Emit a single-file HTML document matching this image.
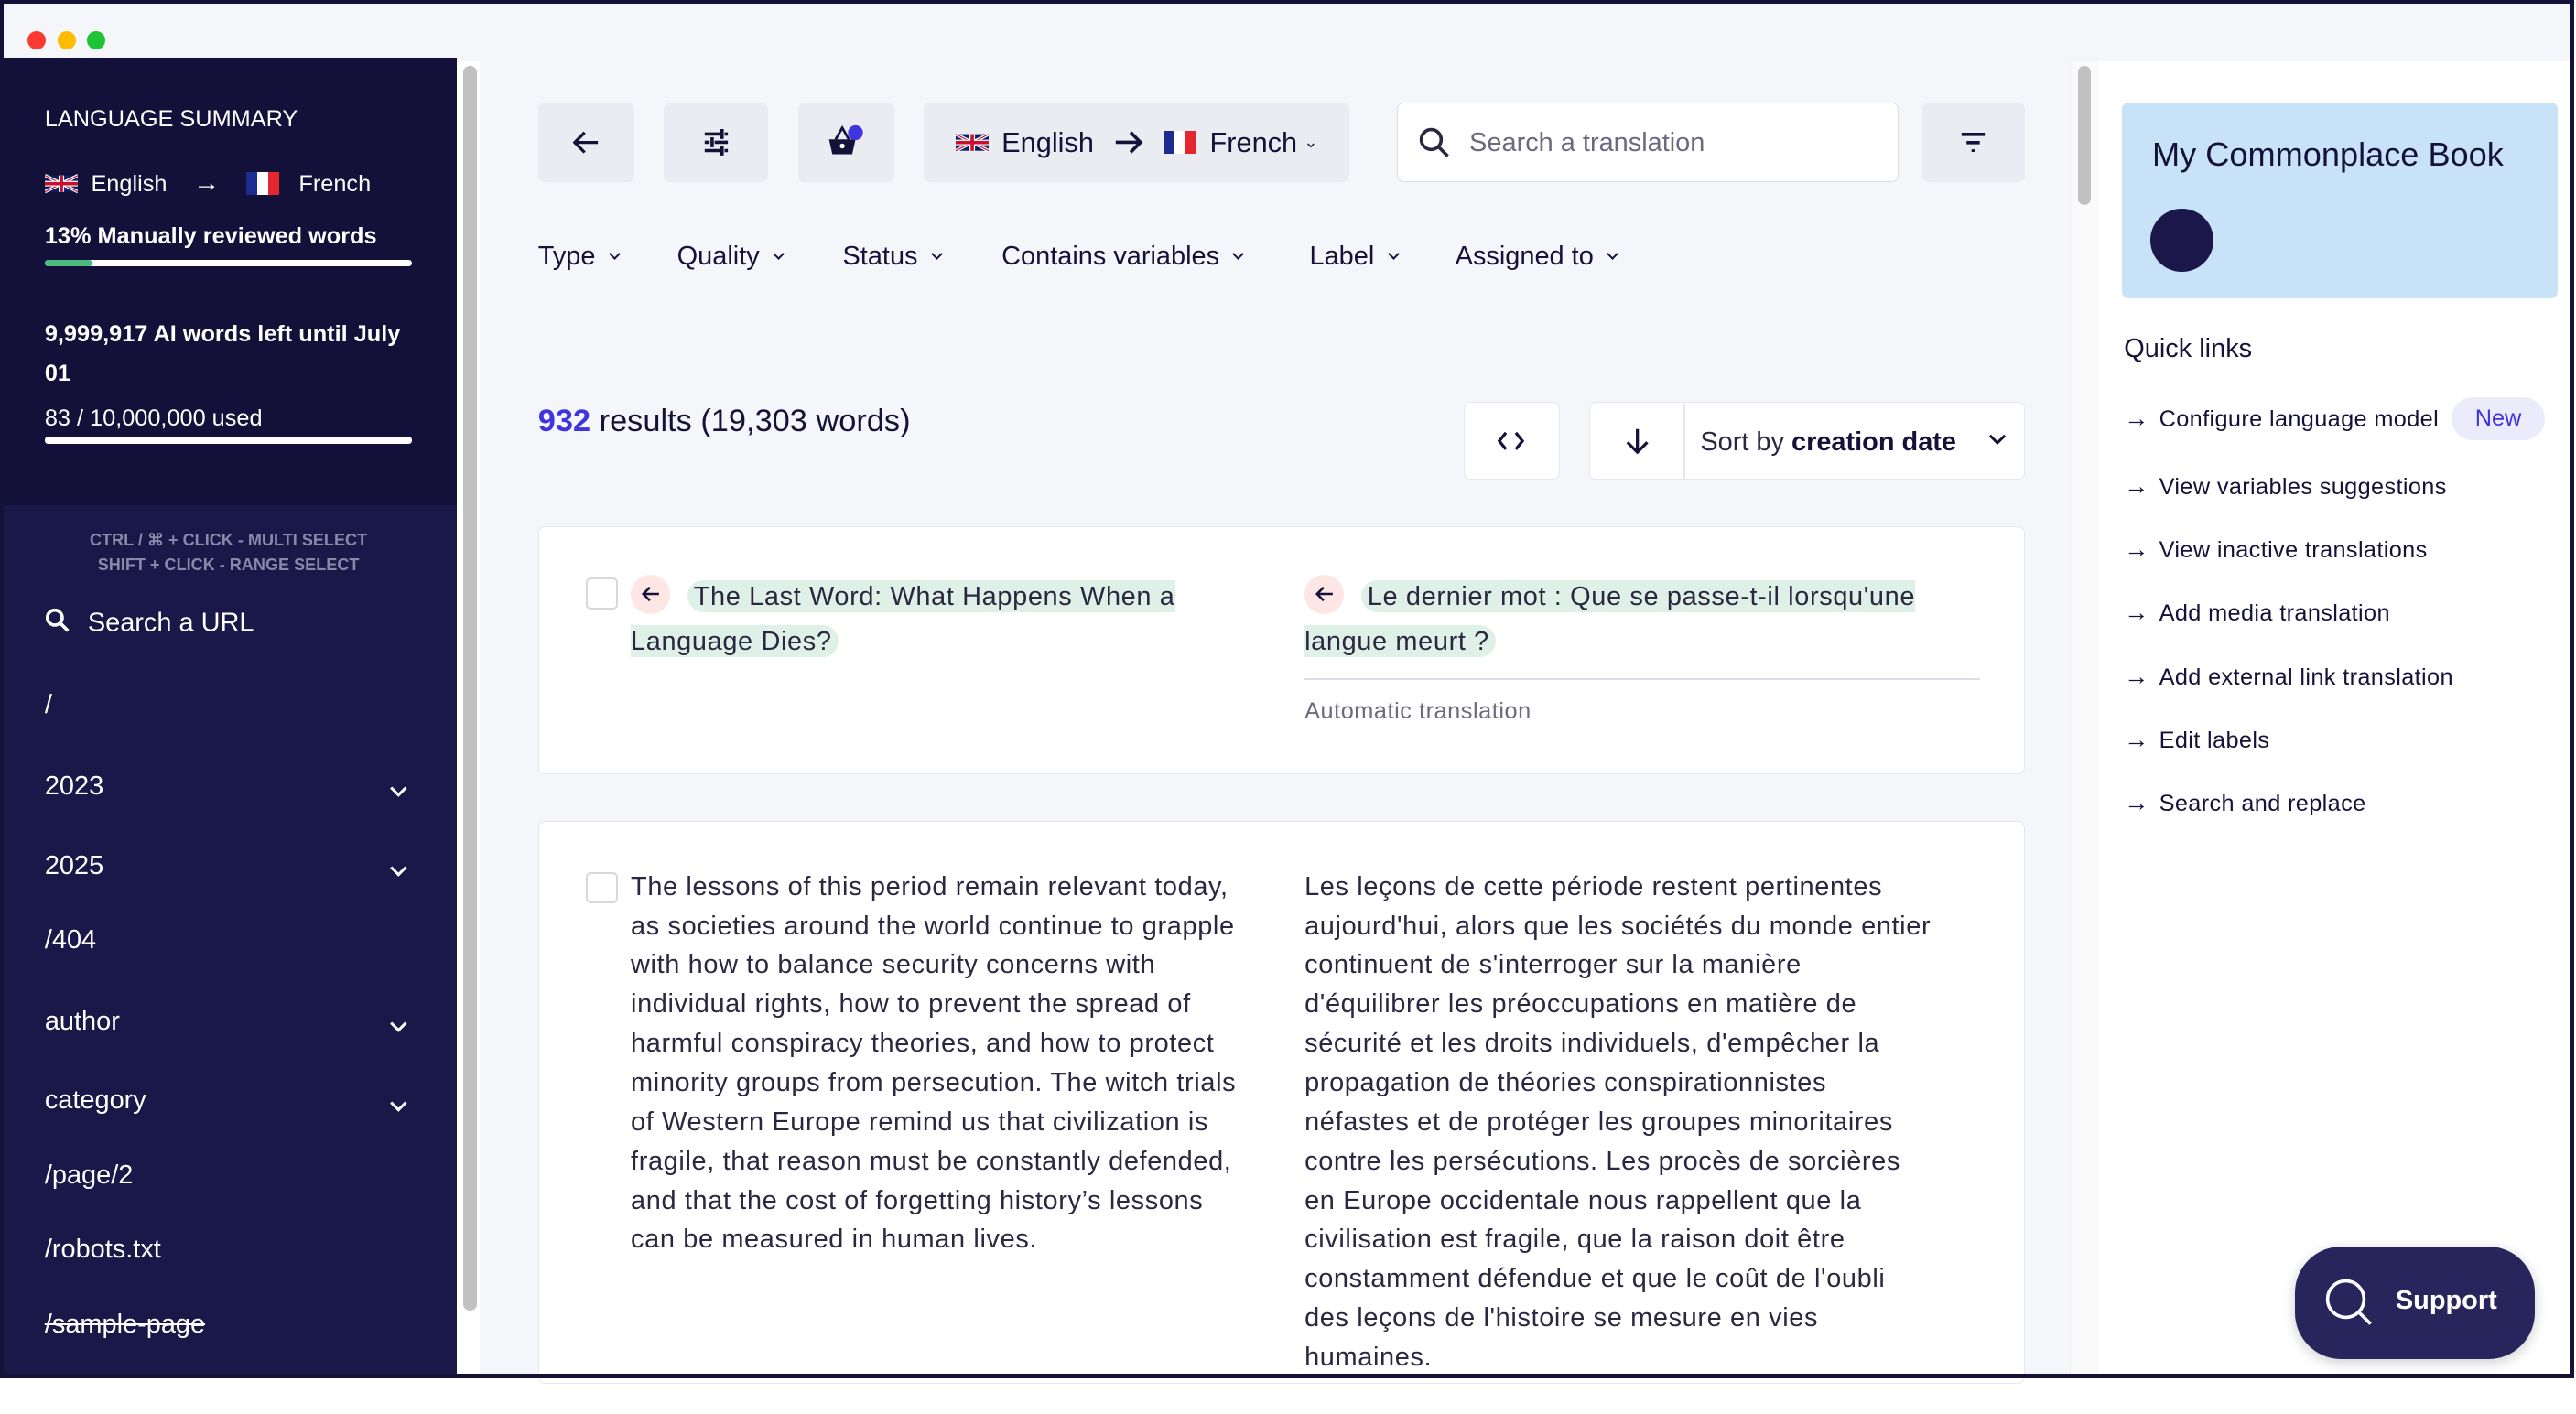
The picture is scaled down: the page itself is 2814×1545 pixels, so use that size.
<!DOCTYPE html>
<html><head><meta charset="utf-8"><style>
*{box-sizing:border-box;margin:0;padding:0}
html,body{width:2814px;height:1545px;overflow:hidden;background:#fff}
#w{zoom:1.8085;width:1556px;height:854px;position:relative;font-family:"Liberation Sans",sans-serif;color:#15123a}
.a{position:absolute}
#frame{left:0;top:0;width:1555px;height:833px;border:2px solid #15123a;background:#f5f6fa;overflow:hidden}
.dot{width:11px;height:11px;border-radius:50%;top:17px}
#side{left:0;top:35px;width:276px;height:796px;background:#131139;color:#fff;overflow:hidden}
#side2{left:0;top:270px;width:276px;height:540px;background:#1a1749}
.side-t{font-size:14px}
.bar{height:4px;background:#fff;border-radius:2px}
.nav{left:27px;font-size:16px;color:#fff}
.chev{right:32px;width:7px;height:7px;border-right:2px solid #fff;border-bottom:2px solid #fff;transform:rotate(45deg)}
.btn{background:#ebecf1;border-radius:4px;top:62px;height:48px;display:flex;align-items:center;justify-content:center}
.filt{top:146px;font-size:16px;color:#15123a}
.filt i{display:inline-block;width:5px;height:5px;border-right:1.5px solid #15123a;border-bottom:1.5px solid #15123a;transform:rotate(45deg);margin-left:9px;position:relative;top:-4px}
.card{background:#fff;border:1px solid #e6e7ee;border-radius:4px}
.txt{font-size:16px;line-height:23.7px;color:#2a2840;letter-spacing:0.35px}
.hl{background:#dff0e6;border-radius:10px;padding:1px 4px}
.ql{left:1283px;font-size:14px;color:#15123a;letter-spacing:0.2px}
.ql b{font-weight:normal;font-size:15px;margin-right:6px}
.flag-uk{display:inline-block;width:20px;height:14px;vertical-align:-2px;margin-right:8px}
.flag-fr{display:inline-block;width:20px;height:14px;vertical-align:-2px;margin-right:8px;background:linear-gradient(90deg,#1d2d8f 0 33%,#fff 33% 66%,#e4262e 66%)}
</style></head><body><div id="w">
<div id="frame" class="a">
 <div class="a dot" style="left:15px;background:#fe3b30"></div>
 <div class="a dot" style="left:33px;background:#febb00"></div>
 <div class="a dot" style="left:51px;background:#1dc534"></div>
</div>
<div id="side" class="a">
 <div id="side2" class="a"></div>
 <div class="a side-t" style="left:27px;top:29px">LANGUAGE SUMMARY</div>
 <div class="a side-t" style="left:27px;top:67px"><svg class="flag-uk" viewBox="0 0 60 30"><rect width="60" height="30" fill="#012169"/><path d="M0 0L60 30M60 0L0 30" stroke="#fff" stroke-width="6"/><path d="M0 0L60 30M60 0L0 30" stroke="#c8102e" stroke-width="2"/><path d="M30 0V30M0 15H60" stroke="#fff" stroke-width="10"/><path d="M30 0V30M0 15H60" stroke="#c8102e" stroke-width="6"/></svg>English <span style="margin:0 12px;font-size:16px">→</span> <span class="flag-fr"></span>&nbsp;French</div>
 <div class="a" style="left:27px;top:100px;font-size:14px;font-weight:bold">13% Manually reviewed words</div>
 <div class="a bar" style="left:27px;top:122px;width:222px"><div style="width:29px;height:4px;background:#4cbb7f;border-radius:2px"></div></div>
 <div class="a" style="left:27px;top:155px;width:230px;font-size:14px;font-weight:bold;line-height:24px">9,999,917 AI words left until July 01</div>
 <div class="a" style="left:27px;top:210px;font-size:14px">83 / 10,000,000 used</div>
 <div class="a bar" style="left:27px;top:229px;width:222px"></div>
 <div class="a" style="left:0;top:284px;width:276px;text-align:center;font-size:10px;font-weight:bold;color:#8a88a8;line-height:15px">CTRL / ⌘ + CLICK - MULTI SELECT<br>SHIFT + CLICK - RANGE SELECT</div>
 <div class="a nav" style="top:332px"><svg width="16" height="16" viewBox="0 0 16 16" style="vertical-align:-2px;margin-right:10px"><circle cx="6" cy="6" r="4.5" fill="none" stroke="#fff" stroke-width="2"/><path d="M9.5 9.5L14 14" stroke="#fff" stroke-width="2"/></svg>Search a URL</div>
 <div class="a nav" style="top:382px">/</div>
 <div class="a nav" style="top:431px">2023</div><div class="a chev" style="top:438px"></div>
 <div class="a nav" style="top:479px">2025</div><div class="a chev" style="top:486px"></div>
 <div class="a nav" style="top:524px">/404</div>
 <div class="a nav" style="top:573px">author</div><div class="a chev" style="top:580px"></div>
 <div class="a nav" style="top:621px">category</div><div class="a chev" style="top:628px"></div>
 <div class="a nav" style="top:666px">/page/2</div>
 <div class="a nav" style="top:711px">/robots.txt</div>
 <div class="a nav" style="top:756px;text-decoration:line-through">/sample-page</div>
</div>
<div class="a" style="left:276px;top:37px;width:14px;height:793px;background:#fff"></div>
<div class="a" style="left:280px;top:40px;width:8px;height:752px;background:#c1c1c1;border-radius:4px"></div>
<div class="a" style="left:1250px;top:37px;width:18px;height:793px;background:#fafafa;border-left:1px solid #eee"></div>
<div class="a" style="left:1255px;top:40px;width:8px;height:84px;background:#c1c1c1;border-radius:4px"></div>

<div class="a btn" style="left:325px;width:58px"><svg width="16" height="14" viewBox="0 0 16 14"><path d="M15 7H2M7 1L1 7l6 6" fill="none" stroke="#15123a" stroke-width="1.8"/></svg></div>
<div class="a btn" style="left:401px;width:63px"><svg width="16" height="16" viewBox="0 0 16 16" stroke="#15123a" stroke-width="2"><path d="M1 3h9M13 3h2M1 8h3M7 8h8M1 13h9M13 13h2M11.5 0v6M5.5 5v6M11.5 10v6"/></svg></div>
<div class="a btn" style="left:482px;width:58px"><svg width="24" height="22" viewBox="0 0 24 22"><path d="M2 9h16l-2 9H4z" fill="#15123a"/><path d="M6 9l4-7 4 7" fill="none" stroke="#15123a" stroke-width="1.5"/><circle cx="10" cy="13" r="1.5" fill="#fff"/><circle cx="18" cy="5" r="4.5" fill="#3f35e0"/></svg></div>
<div class="a btn" style="left:558px;width:257px;font-size:17px;color:#15123a"><svg class="flag-uk" viewBox="0 0 60 30"><rect width="60" height="30" fill="#012169"/><path d="M0 0L60 30M60 0L0 30" stroke="#fff" stroke-width="6"/><path d="M0 0L60 30M60 0L0 30" stroke="#c8102e" stroke-width="2"/><path d="M30 0V30M0 15H60" stroke="#fff" stroke-width="10"/><path d="M30 0V30M0 15H60" stroke="#c8102e" stroke-width="6"/></svg>English <svg width="18" height="16" viewBox="0 0 18 16" style="margin:0 12px"><path d="M1 8h15M10 2l6 6-6 6" fill="none" stroke="#15123a" stroke-width="2"/></svg><span class="flag-fr"></span>French <span style="font-size:10px;margin-left:4px">⌄</span></div>
<div class="a" style="left:844px;top:62px;width:303px;height:48px;background:#fff;border:1px solid #dcdde4;border-radius:4px;font-size:16px;color:#6b6a7e;padding:15px 0 0 43px"><svg class="a" style="left:12px;top:14px" width="20" height="20" viewBox="0 0 20 20"><circle cx="8" cy="8" r="6" fill="none" stroke="#2a2840" stroke-width="2"/><path d="M12.5 12.5L18 18" stroke="#2a2840" stroke-width="2"/></svg>Search a translation</div>
<div class="a btn" style="left:1161px;width:62px"><svg width="16" height="12" viewBox="0 0 16 12" stroke="#15123a" stroke-width="2"><path d="M1 1h14M4 6h8M7 11h2"/></svg></div>

<div class="a filt" style="left:325px">Type<i></i></div>
<div class="a filt" style="left:409px">Quality<i></i></div>
<div class="a filt" style="left:509px">Status<i></i></div>
<div class="a filt" style="left:605px">Contains variables<i></i></div>
<div class="a filt" style="left:791px">Label<i></i></div>
<div class="a filt" style="left:879px">Assigned to<i></i></div>

<div class="a" style="left:325px;top:244px;font-size:19px"><b style="color:#3f35e0">932</b> results (19,303 words)</div>
<div class="a card" style="left:884px;top:243px;width:58px;height:47px"><svg class="a" style="left:20px;top:17px" width="16" height="12" viewBox="0 0 16 12"><path d="M5 1L1 6l4 5M11 1l4 5-4 5" fill="none" stroke="#15123a" stroke-width="1.8"/></svg></div>
<div class="a card" style="left:960px;top:243px;width:263px;height:47px"></div>
<div class="a" style="left:1017px;top:244px;width:1px;height:45px;background:#e6e7ee"></div>
<svg class="a" style="left:982px;top:258px" width="14" height="17" viewBox="0 0 14 17"><path d="M7 1v14M1 9l6 6 6-6" fill="none" stroke="#15123a" stroke-width="1.8"/></svg>
<div class="a" style="left:1027px;top:258px;font-size:16px;color:#2a2840">Sort by <b style="color:#15123a">creation date</b></div>
<svg class="a" style="left:1201px;top:262px" width="11" height="7" viewBox="0 0 11 7"><path d="M1 1l4.5 4.5L10 1" fill="none" stroke="#15123a" stroke-width="1.6"/></svg>

<div class="a card" style="left:325px;top:318px;width:898px;height:150px"></div>
<div class="a" style="left:354px;top:349px;width:19px;height:19px;border:1.5px solid #d7d8de;border-radius:3px;background:#fff"></div>
<div class="a" style="left:381px;top:347px;width:24px;height:24px;border-radius:50%;background:#fde6e4"><svg class="a" style="left:6px;top:7px" width="12" height="10" viewBox="0 0 12 10"><path d="M11 5H2M5.5 1L1.5 5l4 4" fill="none" stroke="#15123a" stroke-width="1.4"/></svg></div>
<div class="a txt" style="left:381px;top:347px;width:350px;line-height:27px;text-indent:34px"><span class="hl">The Last Word: What Happens When a Language Dies?</span></div>
<div class="a" style="left:788px;top:347px;width:24px;height:24px;border-radius:50%;background:#fde6e4"><svg class="a" style="left:6px;top:7px" width="12" height="10" viewBox="0 0 12 10"><path d="M11 5H2M5.5 1L1.5 5l4 4" fill="none" stroke="#15123a" stroke-width="1.4"/></svg></div>
<div class="a txt" style="left:788px;top:347px;width:400px;line-height:27px;text-indent:34px"><span class="hl">Le dernier mot : Que se passe-t-il lorsqu'une langue meurt ?</span></div>
<div class="a" style="left:788px;top:410px;width:408px;height:1px;background:#dcdde4"></div>
<div class="a" style="left:788px;top:422px;font-size:14px;color:#6b6a7e;letter-spacing:0.3px">Automatic translation</div>

<div class="a card" style="left:325px;top:496px;width:898px;height:340px"></div>
<div class="a" style="left:354px;top:527px;width:19px;height:19px;border:1.5px solid #d7d8de;border-radius:3px;background:#fff"></div>
<div class="a txt" style="left:381px;top:524px;width:374px">The lessons of this period remain relevant today, as societies around the world continue to grapple with how to balance security concerns with individual rights, how to prevent the spread of harmful conspiracy theories, and how to protect minority groups from persecution. The witch trials of Western Europe remind us that civilization is fragile, that reason must be constantly defended, and that the cost of forgetting history’s lessons can be measured in human lives.</div>
<div class="a txt" style="left:788px;top:524px;width:382px">Les leçons de cette période restent pertinentes aujourd'hui, alors que les sociétés du monde entier continuent de s'interroger sur la manière d'équilibrer les préoccupations en matière de sécurité et les droits individuels, d'empêcher la propagation de théories conspirationnistes néfastes et de protéger les groupes minoritaires contre les persécutions. Les procès de sorcières en Europe occidentale nous rappellent que la civilisation est fragile, que la raison doit être constamment défendue et que le coût de l'oubli des leçons de l'histoire se mesure en vies humaines.</div>

<div class="a" style="left:1268px;top:37px;width:285px;height:793px;background:#fff"></div>
<div class="a" style="left:1282px;top:62px;width:263px;height:118px;background:#c8e2f7;border-radius:4px"></div>
<div class="a" style="left:1300px;top:82px;font-size:20px">My Commonplace Book</div>
<div class="a" style="left:1299px;top:126px;width:38px;height:38px;border-radius:50%;background:#1b174a"></div>
<div class="a" style="left:1283px;top:202px;font-size:16px">Quick links</div>
<div class="a ql" style="top:244px"><b>→</b>Configure language model</div>
<div class="a" style="left:1481px;top:240px;width:56px;height:26px;border-radius:13px;background:#ecebfb;color:#3f35e0;font-size:14px;text-align:center;line-height:26px">New</div>
<div class="a ql" style="top:285px"><b>→</b>View variables suggestions</div>
<div class="a ql" style="top:323px"><b>→</b>View inactive translations</div>
<div class="a ql" style="top:361px"><b>→</b>Add media translation</div>
<div class="a ql" style="top:400px"><b>→</b>Add external link translation</div>
<div class="a ql" style="top:438px"><b>→</b>Edit labels</div>
<div class="a ql" style="top:476px"><b>→</b>Search and replace</div>
<div class="a" style="left:1386px;top:753px;width:145px;height:68px;border-radius:28px;background:#28245c;box-shadow:0 2px 8px rgba(0,0,0,.2);color:#fff;font-size:16px;font-weight:bold;padding:24px 0 0 61px"><svg class="a" style="left:18px;top:19px" width="30" height="30" viewBox="0 0 30 30"><circle cx="13" cy="13" r="11" fill="none" stroke="#fff" stroke-width="2"/><path d="M21 21l7 7" stroke="#fff" stroke-width="2"/></svg>Support</div>
<div class="a" style="left:0;top:830px;width:1555px;height:3px;background:#15123a"></div>
<div class="a" style="left:1552px;top:0;width:3px;height:833px;background:#15123a"></div>
<div class="a" style="left:0;top:0;width:1555px;height:2px;background:#15123a"></div>
<div class="a" style="left:0;top:0;width:2px;height:833px;background:#15123a"></div>
</div></body></html>
